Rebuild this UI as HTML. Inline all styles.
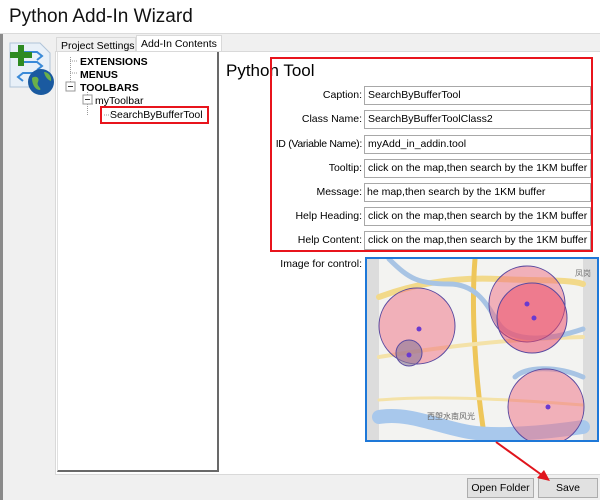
<!DOCTYPE html>
<html><head><meta charset="utf-8"><style>
*{margin:0;padding:0;box-sizing:border-box}
body{width:600px;height:500px;background:#f0f0f0;font-family:"Liberation Sans",sans-serif;font-size:10.5px;position:relative;overflow:hidden;color:#000}
.abs{position:absolute}
.title{left:0;top:0;width:600px;height:34px;background:#fff;border-bottom:1px solid #dadada;font-family:"Liberation Sans",sans-serif;font-size:19px;padding:6px 0 0 9px;color:#111}
.lb{left:0;top:34px;width:3px;height:466px;background:#8a8a8a}
.tab{font-size:10.5px;height:16px;padding:2px 4px;border:1px solid #d9d9d9;border-bottom:none;white-space:nowrap}
.panel{left:55px;top:51px;width:546px;height:424px;background:#fff;border:1px solid #d9d9d9}
.tree{left:57px;top:52px;width:162px;height:420px;background:#fff;border-left:1px solid #e0e0e0;border-right:2px solid #696969;border-bottom:2px solid #696969}
.ti{font-size:10.5px;position:absolute;white-space:nowrap}
.b{font-weight:bold}
.lbl{position:absolute;right:238px;font-size:10.5px;text-align:right;white-space:nowrap}
.inp{position:absolute;left:364px;width:227px;height:19px;border:1px solid #a8a8a8;background:#fff;font-size:10.5px;padding:2px 3px;white-space:nowrap;overflow:hidden}
.btn{position:absolute;top:478px;height:20px;border:1px solid #adadad;background:#e1e1e1;font-size:10.5px;text-align:center;line-height:18px}
</style></head><body>
<div class="abs title">Python Add-In Wizard</div>
<div class="abs lb"></div>
<svg class="abs" style="left:7px;top:40px" width="50" height="55" viewBox="0 0 50 55">
<path d="M3 3h30l10 10v34H3z" fill="#e8f0f8" stroke="#b0c4d8"/>
<path d="M16 12h14l5 4-5 4M16 22h14l5 4-5 4M30 33H16l-5 4 5 4" fill="none" stroke="#3a8ad8" stroke-width="2"/>
<rect x="11" y="5" width="6" height="21" fill="#2e8b22"/><rect x="3" y="12" width="22" height="6" fill="#2e8b22"/>
<circle cx="34" cy="42" r="13" fill="#1a5aa0"/><path d="M25 38c4-3 8 0 6 4s4 6 2 8c-5 0-8-6-8-12zM37 32c4 0 8 4 7 9-3-1-6-4-7-9z" fill="#6ab04a"/>
</svg>
<div class="abs tab" style="left:56px;top:37px;height:15px;width:80px">Project Settings</div>
<div class="abs tab" style="left:136px;top:35px;height:17px;background:#fff;width:86px">Add-In Contents</div>
<div class="abs panel"></div>
<div class="abs tree">
<svg class="abs" style="left:0;top:0" width="60" height="70"><g stroke="#999" stroke-dasharray="1 1" fill="none"><path d="M12.5 5v30M12 9h8M12 21h8M29.5 40v24M30 52h6M46 63h8"/></g>
<rect x="8" y="30" width="9" height="9" fill="#fff" stroke="#999"/><path d="M10 34.5h5" stroke="#333"/>
<rect x="25" y="43" width="9" height="9" fill="#fff" stroke="#999"/><path d="M27 47.5h5" stroke="#333"/></svg>
<div class="ti b" style="left:22px;top:4px">EXTENSIONS</div>
<div class="ti b" style="left:22px;top:17px">MENUS</div>
<div class="ti b" style="left:22px;top:30px">TOOLBARS</div>
<div class="ti" style="left:37px;top:43px">myToolbar</div>
<div class="ti" style="left:42px;top:54px;border:2px solid #e8141c;padding:0 4px 0 8px;height:18px;line-height:14px">SearchByBufferTool</div>
</div>
<div class="abs" style="left:226px;top:61px;font-family:'Liberation Sans',sans-serif;font-size:17px">Python Tool</div>
<div class="abs" style="left:270px;top:57px;width:323px;height:195px;border:2px solid #e8141c"></div>
<div class="lbl" style="top:89px">Caption:</div><div class="inp" style="top:86px">SearchByBufferTool</div>
<div class="lbl" style="top:113px">Class Name:</div><div class="inp" style="top:110px">SearchByBufferToolClass2</div>
<div class="lbl" style="top:138px;letter-spacing:-0.3px">ID (Variable Name):</div><div class="inp" style="top:135px">myAdd_in_addin.tool</div>
<div class="lbl" style="top:162px">Tooltip:</div><div class="inp" style="top:159px">click on the map,then search by the 1KM buffer</div>
<div class="lbl" style="top:186px">Message:</div><div class="inp" style="top:183px;padding-left:2px">he map,then search by the 1KM buffer</div>
<div class="lbl" style="top:210px">Help Heading:</div><div class="inp" style="top:207px">click on the map,then search by the 1KM buffer</div>
<div class="lbl" style="top:234px">Help Content:</div><div class="inp" style="top:231px">click on the map,then search by the 1KM buffer</div>
<div class="lbl" style="top:258px">Image for control:</div>
<svg class="abs" style="left:365px;top:257px" width="234" height="185" viewBox="0 0 234 185">
<rect width="234" height="185" fill="#dcdcdc"/>
<rect x="14" y="2" width="204" height="181" fill="#f3f3f1"/>
<g fill="none" stroke-linecap="round">
<path d="M14 40c40-15 80-20 120-18s70 0 84 5" stroke="#f2d98a" stroke-width="6"/>
<path d="M110 2c-4 50 0 120 10 181" stroke="#eec65a" stroke-width="5"/>
<path d="M14 100c50-8 120-18 204-20" stroke="#f4e2a8" stroke-width="4"/>
<path d="M14 143c60-5 140 0 204 5" stroke="#f4e2a8" stroke-width="3"/>
<path d="M24 2c20 20 30 25 60 25s40 25 50 40 40 20 84 5" stroke="#a8c4e4" stroke-width="5"/>
<path d="M14 160c30-5 60 10 90 15s80 0 114-5" stroke="#a8c8ec" stroke-width="14"/>
<path d="M150 120c10-10 40-12 68 0" stroke="#a8c4e4" stroke-width="5"/>
</g>
<g stroke="#5a4aa0" stroke-width="1">
<circle cx="52" cy="69" r="38" fill="rgba(240,110,130,.5)"/>
<circle cx="44" cy="96" r="13" fill="rgba(140,120,150,.6)"/>
<circle cx="162" cy="47" r="38" fill="rgba(240,110,130,.5)"/>
<circle cx="167" cy="61" r="35" fill="rgba(235,70,100,.5)"/>
<circle cx="181" cy="150" r="38" fill="rgba(240,110,130,.5)"/>
</g>
<g fill="#6a3ad0"><circle cx="54" cy="72" r="2.5"/><circle cx="44" cy="98" r="2.5"/><circle cx="162" cy="47" r="2.5"/><circle cx="169" cy="61" r="2.5"/><circle cx="183" cy="150" r="2.5"/></g>
<text x="62" y="162" font-size="8" fill="#666" font-family="'Noto Sans CJK SC',sans-serif">西塱水南风光</text>
<text x="210" y="19" font-size="8" fill="#777" font-family="'Noto Sans CJK SC',sans-serif">凤岗</text>
<rect x="1" y="1" width="232" height="183" fill="none" stroke="#1e78d8" stroke-width="2"/>
</svg>
<div class="btn" style="left:467px;width:67px">Open Folder</div>
<div class="btn" style="left:538px;width:60px">Save</div>
<svg class="abs" style="left:490px;top:438px" width="70" height="50"><path d="M6 4L56 40" stroke="#e0141c" stroke-width="2"/><path d="M60 43L47 40 54 32z" fill="#e0141c"/></svg>
</body></html>
